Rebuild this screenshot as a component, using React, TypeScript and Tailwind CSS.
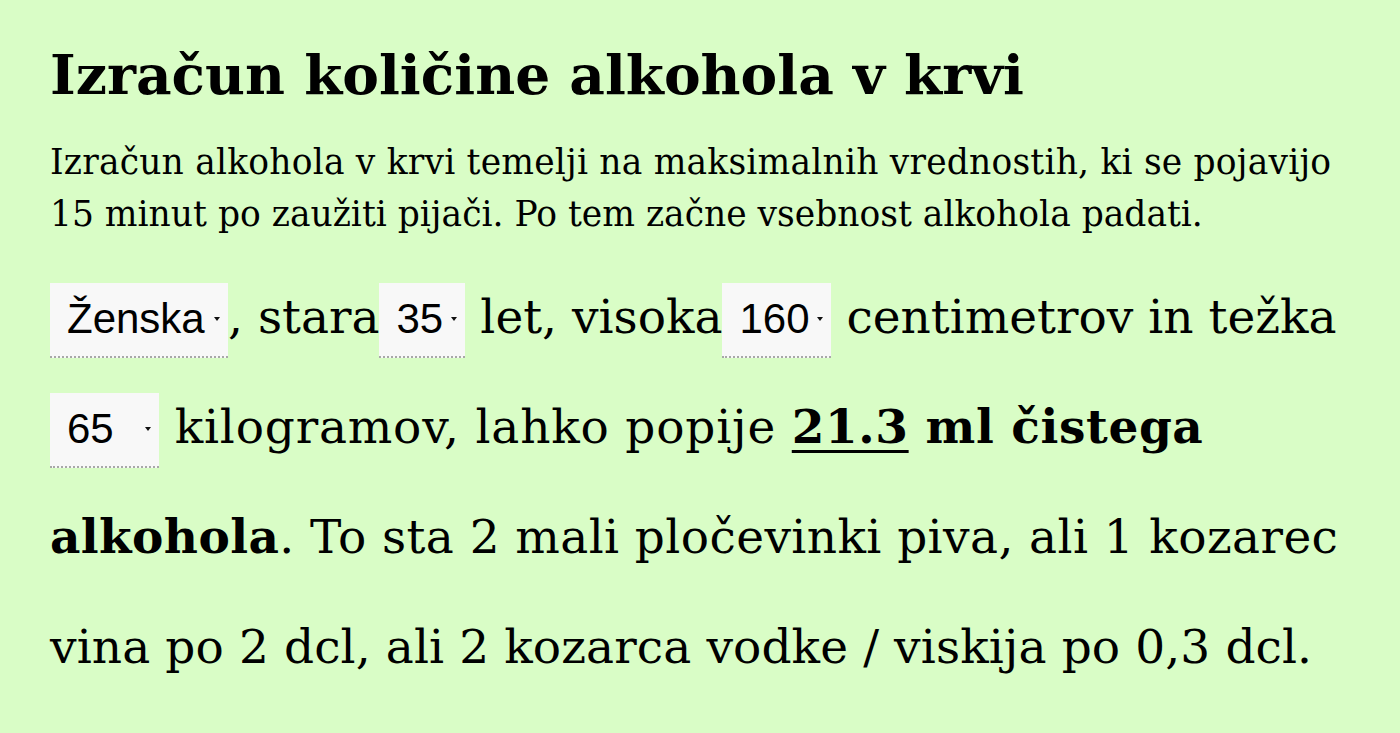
type PickProps = { value: string; width: string };

// Native-looking dropdown: grey field, dotted underline, tiny caret on the right
function Pick({ value, width }: PickProps) {
  return (
    <span
      className={`relative inline-block h-[75px] ${width} bg-[#f8f8f8] border-b-2 border-dotted border-[#a8a8a8] pl-[17px] align-baseline font-['Liberation_Sans',Arial,sans-serif] text-[42px] leading-[72px] font-normal tracking-normal`}
    >
      {value}
      <svg
        className="absolute right-[8px] top-[34px]"
        width="6"
        height="4"
        viewBox="0 0 6 4"
      >
        <path d="M0 0h6L3 4z" fill="#111" />
      </svg>
    </span>
  );
}

export default function App() {
  return (
    <div className="min-h-screen w-full bg-[#d9fdc6] text-black font-['DejaVu_Serif',Georgia,serif]">
      <div className="pl-[50px] pt-[43px]">
        <h1 className="text-[55px] leading-[64px] font-bold whitespace-nowrap">
          Izračun količine alkohola v krvi
        </h1>

        <p className="mt-[29px] text-[34.5px] leading-[52px] whitespace-nowrap">
          <span className="tracking-[0.2px]">
            Izračun alkohola v krvi temelji na maksimalnih vrednostih, ki se pojavijo
          </span>
          <br />
          15 minut po zaužiti pijači. Po tem začne vsebnost alkohola padati.
        </p>

        <p className="mt-[22px] text-[47px] leading-[110px] whitespace-nowrap">
          <span>
            <Pick value="Ženska" width="w-[178px]" />, stara
            <Pick value="35" width="w-[86px]" /> let, visoka
            <Pick value="160" width="w-[109px]" /> centimetrov in težka
          </span>
          <br />
          <span className="tracking-[0.8px]">
            <Pick value="65" width="w-[109px]" /> kilogramov, lahko popije{' '}
          </span>
          <strong className="font-bold tracking-[0.6px]">
            <span className="underline decoration-[3px] underline-offset-[7px]">21.3</span> ml čistega
          </strong>
          <br />
          <span className="tracking-[0.4px]">
            <strong className="font-bold">alkohola</strong>. To sta 2 mali pločevinki piva, ali 1 kozarec
          </span>
          <br />
          <span className="tracking-[0.1px]">
            vina po 2 dcl, ali 2 kozarca vodke / viskija po 0,3 dcl.
          </span>
        </p>
      </div>
    </div>
  );
}
